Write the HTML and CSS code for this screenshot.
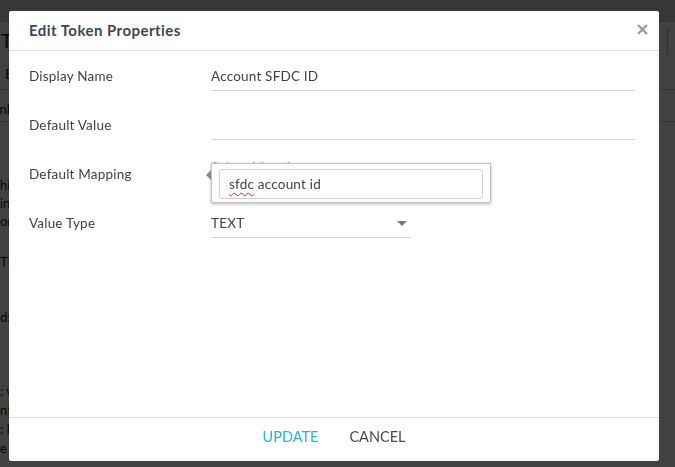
FILE: index.html
```html
<!DOCTYPE html>
<html lang="en">
<head>
<meta charset="utf-8">
<title>Edit Token Properties</title>
<link rel="stylesheet" href="styles.css">
</head>
<body>
<div class="page">
  <div class="page-top"></div>
  <div class="page-row page-row-title">
    <span class="page-title">Tokens</span>
    <span class="page-search"></span>
  </div>
  <div class="page-row page-row-tabs"><span class="page-tab">Edit</span></div>
  <div class="page-row page-row-head"><span class="page-cut">Combined</span></div>
  <div class="page-para">
    <div>hidden token</div>
    <div>index value</div>
    <div>one mapping</div>
  </div>
  <div class="page-line page-gap-1">TEXT</div>
  <div class="page-line page-gap-2">d::</div>
  <div class="page-para page-gap-3">
    <div>: values</div>
    <div>nf</div>
    <div>: Fields</div>
    <div>e</div>
  </div>
</div>

<div class="overlay"></div>

<div class="modal" role="dialog" aria-labelledby="modal-title">
  <div class="modal-header">
    <h2 class="modal-title" id="modal-title">Edit Token Properties</h2>
    <button class="modal-close" aria-label="Close">
      <svg width="11" height="11" viewBox="0 0 11 11"><path d="M1 1 L10 10 M10 1 L1 10" stroke="#9a9a9a" stroke-width="2.2" fill="none"/></svg>
    </button>
  </div>
  <div class="modal-body">
    <div class="form-row">
      <label class="form-label">Display Name</label>
      <div class="field field-text">Account SFDC ID</div>
    </div>
    <div class="form-row">
      <label class="form-label">Default Value</label>
      <div class="field field-text"></div>
    </div>
    <div class="form-row">
      <label class="form-label">Default Mapping</label>
      <div class="field field-mapping">
        <span class="placeholder">Select Mapping...</span>
        <div class="popover">
          <span class="popover-arrow"></span>
          <div class="popover-input"><span class="misspelled">sfdc</span> account id</div>
        </div>
      </div>
    </div>
    <div class="form-row">
      <label class="form-label">Value Type</label>
      <div class="field field-select">
        <span>TEXT</span>
        <span class="caret"></span>
      </div>
    </div>
  </div>
  <div class="modal-footer">
    <button class="btn btn-primary">UPDATE</button>
    <button class="btn">CANCEL</button>
  </div>
</div>
</body>
</html>
```

FILE: styles.css
```css
* { box-sizing: border-box; }
html, body { margin: 0; padding: 0; }
body {
  width: 675px;
  height: 467px;
  overflow: hidden;
  background: #ffffff;
  font-family: Lato, "Open Sans", "Liberation Sans", sans-serif;
}

/* background page (behind overlay) */
.page { color: #222; font-size: 13px; }
.page-top { height: 22px; background: #d4d4d4; border-bottom: 1px solid #c4c4c4; }
.page-row { display: flex; justify-content: space-between; }
.page-row-title { height: 36px; }
.page-title { font-size: 19px; line-height: 38px; margin-left: 1px; }
.page-search { width: 8px; height: 27px; margin-top: 5px; border-left: 1px solid #b0b0b0; }
.page-row-tabs { height: 32px; border-bottom: 1px solid #c6c6c6; }
.page-tab { font-size: 14px; line-height: 32px; margin-left: 5px; }
.page-row-head { height: 32px; border-bottom: 1px solid #c6c6c6; }
.page-cut { font-size: 14px; line-height: 38px; margin-left: -22px; }
.page-para { margin-top: 54px; line-height: 18px; font-size: 13px; }
.page-line { line-height: 18px; font-size: 13px; }
.page-gap-1 { margin-top: 23px; }
.page-gap-2 { margin-top: 37px; }
.page-gap-3 { margin-top: 56px; line-height: 19px; }

.overlay {
  position: fixed;
  inset: 0;
  background: rgba(0, 0, 0, 0.74);
}

/* modal */
.modal {
  position: fixed;
  left: 9px;
  top: 11px;
  width: 650px;
  height: 450px;
  background: #fff;
  border-radius: 2px;
  display: flex;
  flex-direction: column;
  color: #3d4148;
}
.modal-header {
  height: 40px;
  flex: none;
  display: flex;
  align-items: center;
  justify-content: space-between;
  padding: 0 10px 1px 20px;
  border-bottom: 1px solid #dcdcdc;
}
.modal-title {
  margin: 0;
  font-size: 15px;
  font-weight: 700;
  color: #3f4653;
  letter-spacing: 0.45px;
}
.modal-close {
  border: 0;
  background: none;
  padding: 0;
  width: 14px;
  height: 14px;
  display: flex;
  align-items: center;
  justify-content: center;
  margin-bottom: 2px;
}

.modal-body {
  flex: 1;
  padding: 11px 24px 0 20px;
  display: flex;
  flex-direction: column;
  gap: 20px;
}
.form-row {
  display: grid;
  grid-template-columns: 182px 1fr;
  align-items: start;
}
.form-label {
  font-size: 13.5px;
  line-height: 28px;
  color: #3d4148;
  letter-spacing: 0.2px;
}
.field {
  height: 29px;
  font-size: 13.5px;
  line-height: 28px;
  color: #3d4148;
  letter-spacing: 0.2px;
}
.field-text { border-bottom: 1px solid #d6d6d6; }
.field-select {
  width: 200px;
  border-bottom: 1px solid #d6d6d6;
  display: flex;
  justify-content: space-between;
  align-items: center;
  padding-right: 4px;
}
.caret {
  width: 0;
  height: 0;
  border-left: 5px solid transparent;
  border-right: 5px solid transparent;
  border-top: 5px solid #777;
  margin-top: 1px;
}
.field-mapping { position: relative; }
.placeholder {
  display: block;
  color: #a8a8a8;
  line-height: 14px;
}

.popover {
  position: absolute;
  left: 0;
  top: 3px;
  width: 280px;
  padding: 5px 7px 3px 7px;
  background: #fff;
  border: 1px solid #c2c2c2;
  box-shadow: 0 1px 3px rgba(0, 0, 0, 0.28);
}
.popover-arrow {
  position: absolute;
  left: -6px;
  top: 6px;
  width: 0;
  height: 0;
  border-top: 5px solid transparent;
  border-bottom: 5px solid transparent;
  border-right: 5px solid #8a8a8a;
}
.popover-input {
  height: 30px;
  border: 1px solid #cfcfcf;
  border-radius: 3px;
  padding-left: 9px;
  font-size: 13.5px;
  line-height: 28px;
  color: #444;
  letter-spacing: 0.2px;
}
.misspelled {
  text-decoration: underline wavy #e02020;
  text-decoration-thickness: 1px;
  text-underline-offset: 3px;
}

.modal-footer {
  height: 44px;
  flex: none;
  border-top: 1px solid #dcdcdc;
  display: flex;
  justify-content: center;
  align-items: flex-start;
  gap: 31px;
  padding-top: 9px;
}
.btn {
  border: 0;
  background: none;
  padding: 0;
  font-family: inherit;
  font-size: 14.5px;
  line-height: 20px;
  color: #464b55;
}
.btn-primary { color: #29b3dc; }
```
